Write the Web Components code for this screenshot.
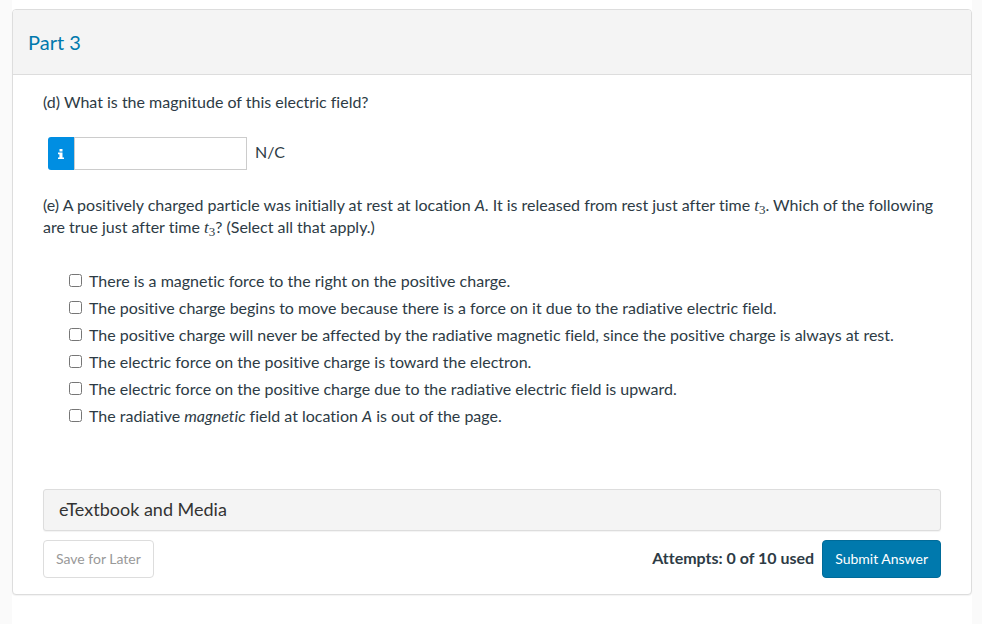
<!DOCTYPE html>
<html lang="en">
<head>
<meta charset="utf-8">
<meta name="viewport" content="width=device-width, initial-scale=1">
<title>Part 3</title>
<style>
html { background: #fafafa; }
body { margin: 0; color: #2d3b45; font: 16px/22px Lato, "Open Sans", sans-serif; font-variant-ligatures: no-common-ligatures; }
i.v { font: italic 17px/1 "Liberation Serif", serif; }
sub.n { font: 13px/1 "Liberation Serif", serif; vertical-align: -3px; }
</style>
</head>
<body>
<assignment-page>
  <part-card>
    <span slot="title">Part 3</span>
    <question-text>(d) What is the magnitude of this electric field?</question-text>
    <numeric-answer unit="N/C"></numeric-answer>
    <question-text>(e) A positively charged particle was initially at rest at location <em>A</em>. It is released from rest just after time <i class="v">t</i><sub class="n">3</sub>. Which of the following are true just after time <i class="v">t</i><sub class="n">3</sub>? (Select all that apply.)</question-text>
    <option-list>
      <check-option>There is a magnetic force to the right on the positive charge.</check-option>
      <check-option>The positive charge begins to move because there is a force on it due to the radiative electric field.</check-option>
      <check-option>The positive charge will never be affected by the radiative magnetic field, since the positive charge is always at rest.</check-option>
      <check-option>The electric force on the positive charge is toward the electron.</check-option>
      <check-option>The electric force on the positive charge due to the radiative electric field is upward.</check-option>
      <check-option>The radiative <em>magnetic</em> field at location <em>A</em> is out of the page.</check-option>
    </option-list>
    <media-panel slot="footer">eTextbook and Media</media-panel>
    <submit-bar slot="footer">Attempts: 0 of 10 used</submit-bar>
  </part-card>
</assignment-page>
<script>
const define = (name, html, setup) => {
  const template = document.createElement('template');
  template.innerHTML = html;
  customElements.define(name, class extends HTMLElement {
    constructor() {
      super();
      this.attachShadow({ mode: 'open' }).append(template.content.cloneNode(true));
    }
    connectedCallback() { if (setup) setup(this, this.shadowRoot); }
  });
};

define('assignment-page', `<style>
  :host { display: block; box-sizing: border-box; min-height: 100vh; margin: 0 10px 0 12px; padding: 9px 0 29px; background: #fff; }
</style><slot></slot>`);

define('part-card', `<style>
  :host { display: block; border: 1px solid #ddd; border-radius: 4px; box-shadow: 0 1px 1px rgba(0,0,0,.05); background: #fff; overflow: hidden; }
  header { padding: 20px 15px; background: #f4f4f4; border-bottom: 1px solid #ddd; }
  h2 { margin: 0; font-size: 20px; line-height: 24px; font-weight: 400; color: #0079ad; }
  .body { display: flex; flex-direction: column; gap: 24px; padding: 16px 30px 0; }
  footer { display: flex; flex-direction: column; gap: 9px; padding: 59px 30px 16px; }
</style>
<header><h2><slot name="title"></slot></h2></header>
<div class="body"><slot></slot></div>
<footer><slot name="footer"></slot></footer>`);

define('question-text', `<style>:host { display: block; } p { margin: 0; }</style><p><slot></slot></p>`);

define('numeric-answer', `<style>
  :host { display: flex; align-items: center; padding-left: 5px; }
  button { display: grid; place-items: center; width: 26px; height: 33px; padding: 0; border: 0; border-radius: 3px 0 0 3px; background: #008ee2; }
  input { box-sizing: border-box; width: 173px; height: 33px; padding: 4px 8px; border: 1px solid #ccc; font: inherit; color: inherit; }
  label { padding: 0 0 3px 8px; }
</style>
<button type="button" aria-label="Answer format information"><svg width="6" height="10" viewBox="0 0 6 10" fill="#fff" aria-hidden="true"><path d="M1.5 0h3v2.4h-3zM0 3.6h4.5v4.8H6V10H0V8.4h1.4V5.2H0z"/></svg></button>
<input id="value" type="text"><label for="value"></label>`,
(host, root) => { root.querySelector('label').textContent = host.getAttribute('unit'); });

define('option-list', `<style>:host { display: block; padding: 6px 0 0 26px; }</style><slot></slot>`);

define('check-option', `<style>
  :host { display: block; }
  label { display: flex; align-items: flex-start; gap: 7px; padding: 2px 0 3px; }
  input { flex: none; width: 13px; height: 13px; margin: 4px 0 0; }
</style><label><input type="checkbox"><span><slot></slot></span></label>`);

define('media-panel', `<style>
  :host { display: block; }
  button { display: block; width: 100%; padding: 8px 15px 10px; border: 1px solid #ddd; border-radius: 3px; box-shadow: 0 1px 1px rgba(0,0,0,.05); background: #f4f4f4; color: #333; font: inherit; font-variant-ligatures: inherit; font-size: 18px; line-height: 22px; text-align: left; }
</style><button type="button"><slot></slot></button>`);

define('submit-bar', `<style>
  :host { display: flex; flex-wrap: wrap; align-items: center; gap: 8px; }
  button { padding: 8px 12px; border-radius: 4px; font: inherit; font-size: 14px; line-height: 20px; }
  .save { margin-right: auto; border: 1px solid #ddd; background: #fff; color: #999; }
  .submit { border: 1px solid #006b99; background: #0079ad; color: #fff; }
  .attempts { font-weight: 700; padding-bottom: 3px; }
</style>
<button class="save" type="button">Save for Later</button>
<span class="attempts"><slot></slot></span>
<button class="submit" type="submit">Submit Answer</button>`);
</script>
</body>
</html>
